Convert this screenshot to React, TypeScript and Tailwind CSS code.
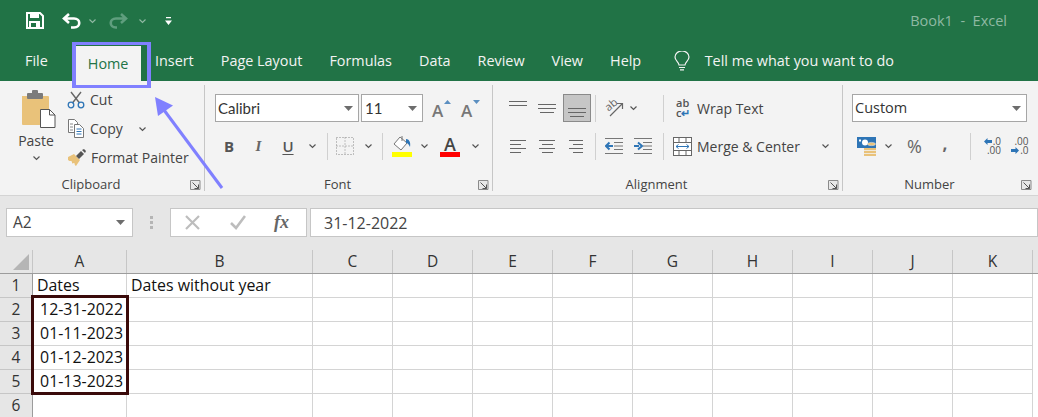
const Chev = ({ light }: { light?: boolean }) => (
  <svg width="9" height="6" viewBox="0 0 9 6" fill="none" stroke={light ? '#8fb9a3' : '#555'} strokeWidth="1.2">
    <path d="M1.5 1.5 L4.5 4.5 L7.5 1.5" />
  </svg>
);

const Caret = () => (
  <svg width="9" height="5" viewBox="0 0 9 5"><path d="M0 0h9L4.5 5z" fill="#6d6d6d" /></svg>
);

const Launcher = () => (
  <svg width="11" height="10" viewBox="0 0 11 10" fill="none">
    <path d="M.5.5h9.500v9H.500z" stroke="#8a8a8a" fill="#e8e8e8" strokeWidth="1" />
    <path d="M2.500 2.500L8.500 8.500M8.500 4.500v4h-4" stroke="#555" strokeWidth="1" />
  </svg>
);

const Sep = () => <div className="w-px bg-[#d0d0d0] h-[27px]" />;

const Lines = ({ widths, align }: { widths: number[]; align: 'start' | 'center' | 'end' }) => (
  <div className={`flex flex-col gap-[3px] ${align === 'start' ? 'items-start' : align === 'end' ? 'items-end' : 'items-center'}`}>
    {widths.map((w, i) => (
      <div key={i} className="h-px bg-[#666]" style={{ width: w }} />
    ))}
  </div>
);

const GroupLabel = ({ label, pr }: { label: string; pr: string }) => (
  <div className="h-[21px] grid grid-cols-[1fr_auto_1fr] items-center">
    <span />
    <span className="text-[13px] leading-none text-[#444] mr-[22px]">{label}</span>
    <span className={`flex justify-end ${pr}`}><Launcher /></span>
  </div>
);

const Group = ({ label, width, children }: { label: string; width: string; children: React.ReactNode }) => (
  <div className={`flex h-[114px] shrink-0 ${width}`}>
    <div className="flex flex-col flex-1 min-w-0">
      <div className="flex-1 min-h-0">{children}</div>
      <GroupLabel label={label} pr="pr-[3px]" />
    </div>
    <div className="w-px h-[106px] mt-[4px] bg-[#c6c6c6]" />
  </div>
);

const PasteIcon = () => (
  <svg width="36" height="38" viewBox="0 0 36 38">
    <path d="M1 6h26a1 1 0 0 1 1 1v28H2a1 1 0 0 1-1-1z" fill="#e9c27a" />
    <rect x="6" y="3" width="16" height="6" rx="1" fill="#7b7b7b" />
    <rect x="11" y="0" width="6" height="4" rx="1" fill="#7b7b7b" />
    <path d="M19.500 19.500h9l5.500 5.500v12.500h-14.500z" fill="#fff" stroke="#555" />
    <path d="M28.500 19.500v5.500h5.500" fill="none" stroke="#555" />
  </svg>
);

const CutIcon = () => (
  <svg width="18" height="18" viewBox="0 0 18 18" fill="none">
    <path d="M4 1l8.500 11M14 1L5.500 12" stroke="#666" strokeWidth="1.400" />
    <circle cx="4" cy="14" r="2.800" stroke="#2e75b6" strokeWidth="1.300" />
    <circle cx="14" cy="14" r="2.800" stroke="#2e75b6" strokeWidth="1.300" />
  </svg>
);

const CopyIcon = () => (
  <svg width="18" height="19" viewBox="0 0 18 19" fill="none">
    <path d="M1.500.500h6l3 3v10h-9z" fill="#fff" stroke="#777" />
    <path d="M7.500 5.500h5l4 4v9h-9z" fill="#fff" stroke="#777" />
    <path d="M3 5h3M3 8h3M3 11h3" stroke="#888" />
    <path d="M9.500 10h5M9.500 12.500h5M9.500 15h5" stroke="#2e75b6" />
  </svg>
);

const PainterIcon = () => (
  <svg width="19" height="18" viewBox="0 0 19 18">
    <path d="M1 8l6-3 6 6-4 6c-2-1-1-3-2-3s-2 1-2 0 0-2-1-2-2 0-3-1z" fill="#e9c27a" />
    <path d="M9 7l5-5 3 3-5 5z" fill="#555" />
    <path d="M15 1l2-1 2 2-1 2z" fill="#555" />
  </svg>
);

const GrowA = ({ up }: { up?: boolean }) => (
  <div className="relative w-[16px] h-[22px]">
    <span className="absolute left-0 bottom-0 text-[17px] leading-none text-[#777] font-semibold">A</span>
    <svg className="absolute right-[-3px] top-[3px]" width="7" height="4" viewBox="0 0 7 4">
      <path d={up ? 'M0 4h7L3.500 0z' : 'M0 0h7L3.500 4z'} fill="#5b8fc0" />
    </svg>
  </div>
);

const BorderIcon = () => (
  <svg width="18" height="18" viewBox="0 0 18 18" fill="none" stroke="#888" strokeDasharray="1 2">
    <path d="M.5.500h17v17H.500zM9 .500v17M.500 9h17" />
  </svg>
);

const FillIcon = () => (
  <div className="flex flex-col items-center">
    <svg width="20" height="16" viewBox="0 0 20 16" fill="none">
      <path d="M8 1l7 6-6 7-7-6z" fill="#fff" stroke="#777" />
      <path d="M10 0v5" stroke="#777" />
      <path d="M14 3c3 0 5 3 4 8-1-2-2-4-4-4z" fill="#2e75b6" />
    </svg>
    <div className="w-[20px] h-[5px] bg-[#ffff00]" />
  </div>
);

const OrientIcon = () => (
  <svg className="overflow-visible" width="20" height="20" viewBox="0 0 20 20" fill="none">
    <text x="2" y="11" fontSize="11" fill="#666" transform="rotate(-40 7 9)" fontFamily="Open Sans, sans-serif">ab</text>
    <path d="M6 18L18 6M13 5.500h5.500V11" stroke="#666" strokeWidth="1.200" />
  </svg>
);

const IndentIcon = ({ flip }: { flip?: boolean }) => (
  <svg width="18" height="16" viewBox="0 0 18 16" fill="none">
    <path d="M0 .500h18M9 4.500h9M9 8h9M9 11.500h9M0 15.500h18" stroke="#777" />
    {flip ? (
      <path d="M0 8h5M4 4.500L8 8l-4 3.500" stroke="#2e75b6" strokeWidth="2" />
    ) : (
      <path d="M8 8H2M4.500 4.500L1 8l3.500 3.500" stroke="#2e75b6" strokeWidth="2" />
    )}
  </svg>
);

const MergeIcon = () => (
  <svg width="19" height="19" viewBox="0 0 19 19" fill="none">
    <rect x=".5" y=".5" width="18" height="18" fill="#fff" stroke="#666" />
    <path d="M.500 5.500h18M.500 13.500h18M6 .500v5M13 .500v5M6 13.500v5M13 13.500v5" stroke="#666" />
    <path d="M3 9.500h13M5.500 7.500l-2.500 2 2.500 2M13.500 7.500l2.500 2-2.500 2" stroke="#2e75b6" />
  </svg>
);

const CurrencyIcon = () => (
  <svg width="20" height="20" viewBox="0 0 20 20">
    <rect x="0" y="1" width="19" height="11" fill="#2e75b6" />
    <circle cx="8" cy="6.500" r="3" fill="#fff" />
    <rect x="2" y="3.500" width="2" height="2" fill="#fff" />
    <ellipse cx="14.500" cy="8" rx="4" ry="1.600" fill="#e9c27a" stroke="#f3f3f3" strokeWidth=".5" />
    <rect x="7" y="12" width="12" height="2.200" fill="#e9c27a" />
    <rect x="7" y="15" width="12" height="2.200" fill="#e9c27a" />
    <rect x="7" y="18" width="12" height="2" fill="#e9c27a" />
  </svg>
);

const DecimalIcon = ({ more }: { more?: boolean }) => (
  <div className="flex flex-col text-[10px] leading-[9px] text-[#555] items-end w-[17px]">
    {more ? (
      <>
        <span className="flex items-center gap-px">
          <svg width="8" height="7" viewBox="0 0 8 7"><path d="M0 3.500L3.500 0v2H8v3H3.500v2z" fill="#2e75b6" /></svg>.0
        </span>
        <span>.00</span>
      </>
    ) : (
      <>
        <span>.00</span>
        <span className="flex items-center gap-px">
          <svg width="8" height="7" viewBox="0 0 8 7"><path d="M8 3.500L4.500 0v2H0v3h4.500v2z" fill="#2e75b6" /></svg>.0
        </span>
      </>
    )}
  </div>
);

const Slot = ({ w, children }: { w: string; children: React.ReactNode }) => (
  <div className={`flex items-center justify-center h-[28px] shrink-0 ${w}`}>{children}</div>
);

const tabs = ['Insert', 'Page Layout', 'Formulas', 'Data', 'Review', 'View', 'Help'];
const cols = [
  { name: 'A', w: 'w-[94px]' },
  { name: 'B', w: 'w-[186px]' },
  { name: 'C', w: 'w-[80px]' },
  { name: 'D', w: 'w-[80px]' },
  { name: 'E', w: 'w-[80px]' },
  { name: 'F', w: 'w-[80px]' },
  { name: 'G', w: 'w-[80px]' },
  { name: 'H', w: 'w-[80px]' },
  { name: 'I', w: 'w-[80px]' },
  { name: 'J', w: 'w-[80px]' },
  { name: 'K', w: 'w-[80px]' },
];
const rows = [
  ['Dates', 'Dates without year'],
  ['12-31-2022', ''],
  ['01-11-2023', ''],
  ['01-12-2023', ''],
  ['01-13-2023', ''],
  ['', ''],
];

export default function App() {
  return (
    <div className="relative w-[1038px] h-[417px] overflow-hidden bg-white font-['Open_Sans',sans-serif] text-[#444]">
      {/* title bar */}
      <div className="h-[40px] bg-[#217346] flex items-center pl-[26px] pt-px">
        <svg width="18" height="17" viewBox="0 0 18 17" fill="none">
          <path d="M1 1h13l3 3v12H1z" stroke="#fff" strokeWidth="2" />
          <rect x="4" y="1" width="9" height="5" fill="#fff" />
          <path d="M4 16v-6h9v6" stroke="#fff" strokeWidth="2" />
          <rect x="10" y="11" width="2" height="4" fill="#fff" />
        </svg>
        <svg className="ml-[18px]" width="19" height="16" viewBox="0 0 19 16" fill="none" stroke="#fff" strokeWidth="2.600">
          <path d="M7 1L2 5.500l5 4.500M2 5.500h10c7 0 7 9 0 9H9" />
        </svg>
        <span className="ml-[7px]"><Chev light /></span>
        <svg className="ml-[12px]" width="19" height="16" viewBox="0 0 19 16" fill="none" stroke="#5f9e7e" strokeWidth="2.600">
          <path d="M12 1l5 4.500-5 4.500M17 5.500H7c-7 0-7 9 0 9h1" />
        </svg>
        <span className="ml-[10px]"><Chev light /></span>
        <svg className="ml-[18px]" width="7" height="8" viewBox="0 0 7 8"><path d="M1 0h5v1.200H1zM0 3.500h7L3.500 8z" fill="#fff" /></svg>
        <span className="ml-auto mr-[31px] text-[14.500px] text-[#8fb9a3] whitespace-pre">Book1  -  Excel</span>
      </div>

      {/* tabs */}
      <div className="h-[41px] bg-[#217346] flex items-end pl-[12px] text-[14.400px] text-[#f3f3f3]">
        <div className="h-[41px] px-[13px] mr-[14px] flex items-center">File</div>
        <div className="h-[35px] px-[13px] pt-[-2px] bg-[#f3f3f3] text-[#217346] flex items-center pt-[1px]">Home</div>
        {tabs.map(t => (
          <div key={t} className="h-[41px] px-[13.500px] flex items-center whitespace-nowrap">{t}</div>
        ))}
        <div className="h-[41px] ml-[19px] flex items-center gap-[15px] whitespace-nowrap">
          <svg width="16" height="20" viewBox="0 0 16 20" fill="none" stroke="#f3f3f3" strokeWidth="1.200">
            <path d="M5 14c0-3-4-4-4-8a7 6 0 0 1 14 0c0 4-4 5-4 8z" />
            <path d="M5 16.500h6M6 18.800h4" />
          </svg>
          Tell me what you want to do
        </div>
      </div>

      {/* ribbon */}
      <div className="h-[115px] bg-[#f3f3f3] border-b border-[#d4d4d4] flex text-[14px]">
        <Group label="Clipboard" width="w-[205px]">
          <div className="flex">
            <div className="w-[67px] flex flex-col items-center pl-[5px] pt-[9px]">
              <span className="ml-[6px]"><PasteIcon /></span>
              <span className="mt-[4px] leading-[18px]">Paste</span>
              <span className="mt-[5px]"><Chev /></span>
            </div>
            <div className="flex flex-col pt-[4px]">
              <div className="flex items-center h-[29px] gap-[5px]"><CutIcon />Cut</div>
              <div className="flex items-center h-[29px] gap-[5px]"><CopyIcon />Copy<span className="ml-[10px]"><Chev /></span></div>
              <div className="flex items-center h-[29px] gap-[5px] whitespace-nowrap"><PainterIcon />Format Painter</div>
            </div>
          </div>
        </Group>

        <Group label="Font" width="w-[288px]">
          <div className="pl-[10px] pt-[13px]">
            <div className="flex items-center h-[28px]">
              <div className="w-[144px] h-[28px] bg-white border border-[#a6a6a6] flex items-center justify-between pl-[2px] pr-[5px] font-['Lato',sans-serif] text-[15px] text-[#333]">Calibri<Caret /></div>
              <div className="ml-[2px] w-[62px] h-[28px] bg-white border border-[#a6a6a6] flex items-center justify-between pl-[3px] pr-[5px] font-['Lato',sans-serif] text-[15px] text-[#333]">11<Caret /></div>
              <div className="ml-[9px]"><GrowA up /></div>
              <div className="ml-[13px]"><GrowA /></div>
            </div>
            <div className="flex items-center mt-[10px]">
              <Slot w="w-[28px]"><span className="font-bold text-[15px] text-[#555]">B</span></Slot>
              <Slot w="w-[31px]"><span className="italic font-bold text-[15px] text-[#666] font-['Liberation_Serif',serif]">I</span></Slot>
              <Slot w="w-[28px]"><span className="font-semibold text-[15px] text-[#555] underline underline-offset-2">U</span></Slot>
              <Slot w="w-[20px]"><Chev /></Slot>
              <Slot w="w-[10px]"><Sep /></Slot>
              <Slot w="w-[26px]"><BorderIcon /></Slot>
              <Slot w="w-[20px]"><Chev /></Slot>
              <Slot w="w-[8px]"><Sep /></Slot>
              <Slot w="w-[31px]"><FillIcon /></Slot>
              <Slot w="w-[14px]"><Chev /></Slot>
              <Slot w="w-[38px]">
                <div className="flex flex-col items-center">
                  <span className="text-[18px] leading-[16px] font-semibold text-[#444]">A</span>
                  <div className="w-[20px] h-[5px] bg-[#ff0000]" />
                </div>
              </Slot>
              <Slot w="w-[12px]"><Chev /></Slot>
            </div>
          </div>
        </Group>

        <Group label="Alignment" width="w-[350px]">
          <div className="pl-[10px] pt-[13px]">
            <div className="flex items-center h-[28px]">
              <Slot w="w-[30px]"><div className="mb-[10px]"><Lines widths={[18, 18]} align="center" /></div></Slot>
              <Slot w="w-[28px]"><Lines widths={[18, 18, 14]} align="center" /></Slot>
              <div className="ml-[2px] w-[28px] h-[28px] bg-[#c6c6c6] border border-[#8a8a8a] flex items-end justify-center pb-[4px]"><Lines widths={[18, 18, 14]} align="center" /></div>
              <Slot w="w-[8px]"><Sep /></Slot>
              <Slot w="w-[29px]"><OrientIcon /></Slot>
              <Slot w="w-[10px]"><Chev /></Slot>
              <div className="ml-[25px]"><Sep /></div>
              <div className="ml-[12px] flex items-center gap-[5px]">
                <div className="w-[16px] text-[11px] leading-[10px] font-semibold text-[#555]">ab<br />c<span className="text-[#2e75b6]">↵</span></div>
                <span className="text-[14px]">Wrap Text</span>
              </div>
            </div>
            <div className="flex items-center mt-[10px]">
              <Slot w="w-[30px]"><Lines widths={[16, 11, 16, 11]} align="start" /></Slot>
              <Slot w="w-[28px]"><Lines widths={[16, 11, 16, 11]} align="center" /></Slot>
              <Slot w="w-[30px]"><Lines widths={[14, 10, 14, 10]} align="end" /></Slot>
              <Slot w="w-[8px]"><Sep /></Slot>
              <Slot w="w-[29px]"><IndentIcon /></Slot>
              <Slot w="w-[29px]"><IndentIcon flip /></Slot>
              <div className="ml-[6px]"><Sep /></div>
              <div className="ml-[9px] flex items-center gap-[5px] whitespace-nowrap">
                <MergeIcon />
                Merge &amp; Center
                <span className="ml-[16px]"><Chev /></span>
              </div>
            </div>
          </div>
        </Group>

        <div className="flex flex-col h-[114px] flex-1">
          <div className="flex-1 min-h-0 pl-[9px] pt-[13px]">
            <div className="w-[175px] h-[28px] bg-white border border-[#a6a6a6] flex items-center justify-between pl-[2px] pr-[5px] text-[#333] text-[14.500px]">Custom<Caret /></div>
            <div className="flex items-center mt-[10px] pl-[3px]">
              <Slot w="w-[24px]"><CurrencyIcon /></Slot>
              <Slot w="w-[18px]"><Chev /></Slot>
              <Slot w="w-[32px]"><span className="ml-[3px] text-[18px] text-[#666]">%</span></Slot>
              <Slot w="w-[32px]"><span className="font-bold text-[17px] text-[#666] mb-[5px]">,</span></Slot>
              <Slot w="w-[18px]"><Sep /></Slot>
              <Slot w="w-[27px]"><DecimalIcon more /></Slot>
              <Slot w="w-[28px]"><DecimalIcon /></Slot>
            </div>
          </div>
          <GroupLabel label="Number" pr="pr-[6px]" />
        </div>
      </div>

      {/* formula bar */}
      <div className="h-[54px] bg-[#e6e6e6] flex items-start pt-[12px] pl-[6px] text-[15.500px]">
        <div className="w-[127px] h-[29px] bg-white border border-[#c6c6c6] flex items-center justify-between pl-[6px] pr-[7px]">A2<Caret /></div>
        <div className="w-[37px] h-[29px] flex flex-col items-center justify-center gap-[2px]">
          <div className="w-[3px] h-[3px] bg-[#b5b5b5]" />
          <div className="w-[3px] h-[3px] bg-[#b5b5b5]" />
          <div className="w-[3px] h-[3px] bg-[#b5b5b5]" />
        </div>
        <div className="w-[137px] h-[29px] bg-white border border-[#c6c6c6] flex items-center pl-[14px]">
          <svg width="15" height="15" viewBox="0 0 15 15" stroke="#bdbdbd" strokeWidth="2.200"><path d="M1 1l13 13M14 1L1 14" /></svg>
          <svg className="ml-[30px]" width="16" height="15" viewBox="0 0 16 15" fill="none" stroke="#bdbdbd" strokeWidth="2.600"><path d="M1 8l5 5 9-12" /></svg>
          <span className="ml-[28px] font-['Liberation_Serif',serif] italic font-bold text-[18px] text-[#666]">fx</span>
        </div>
        <div className="ml-[3px] flex-1 h-[29px] bg-white border border-[#c6c6c6] flex items-center pl-[13px] text-[16px]">31-12-2022</div>
      </div>

      {/* sheet */}
      <div className="relative">
        <div className="flex h-[24px] bg-[#e6e6e6] border-b border-[#9c9c9c]">
          <div className="w-[33px] shrink-0 border-r border-[#c6c6c6] flex items-end justify-end pr-[3px] pb-[3px]">
            <svg width="16" height="16" viewBox="0 0 16 16"><path d="M16 0v16H0z" fill="#b5b5b5" /></svg>
          </div>
          {cols.map(c => (
            <div key={c.name} className={`${c.w} shrink-0 border-r border-[#c6c6c6] flex items-center justify-center text-[15.500px] text-[#333]`}>{c.name}</div>
          ))}
        </div>
        {rows.map((r, i) => (
          <div key={i} className="flex h-[24px] text-[15.900px] text-[#111]">
            <div className="w-[33px] shrink-0 bg-[#e6e6e6] border-r border-[#9c9c9c] border-b border-b-[#c6c6c6] flex items-center justify-center text-[#333] text-[15.500px]">{i + 1}</div>
            {cols.map((c, j) => (
              <div key={c.name} className={`${c.w} shrink-0 border-r border-b border-[#d4d4d4] flex items-center whitespace-nowrap ${i > 0 && i < 5 && j === 0 ? 'justify-end pr-[3px]' : 'pl-[4px]'}`}>
                {j < 2 ? r[j] : ''}
              </div>
            ))}
          </div>
        ))}
        {/* selection frame */}
        <div className="absolute left-[31px] top-[45px] w-[98px] h-[100px] border-[3px] border-[#3a0a0a]" />
      </div>

      {/* annotation */}
      <div className="absolute left-[72px] top-[42px] w-[79px] h-[46px] border-x-4 border-y-[3px] border-[#8080ff]" />
      <svg className="absolute left-0 top-0" width="1038" height="417" fill="none">
        <path d="M222 188L161 106" stroke="#8080ff" strokeWidth="3" />
        <path d="M155 97l18 8.500-15 10.500z" fill="#8080ff" />
      </svg>
    </div>
  );
}
